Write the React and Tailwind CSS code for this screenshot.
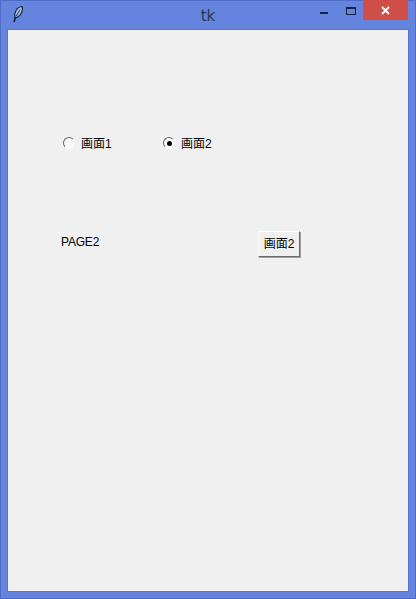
import React from "react";

const cjk = "font-['Liberation_Sans','Noto_Sans_CJK_JP',sans-serif]";

function Radio({ label, checked }) {
  return (
    <label className="flex items-center w-[100px] h-[16px]">
      <span className="ml-[1px] w-[12px] h-[12px] rounded-full bg-[#f9f9f9] border border-t-[#666666] border-l-[#666666] border-r-[#f6f6f6] border-b-[#ffffff] flex items-center justify-center shrink-0">
        {checked && <span className="w-[5px] h-[5px] rounded-full bg-black"></span>}
      </span>
      <span className="ml-[6px] mt-[1px] text-[12px] leading-[16px] text-black">{label}</span>
    </label>
  );
}

export default function App() {
  return (
    <div className={`w-[416px] h-[599px] flex flex-col bg-[#6484de] shadow-[inset_0_0_0_1px_#4f6cc8] ${cjk}`}>
      {/* Title bar */}
      <div className="h-[30px] shrink-0 flex items-start relative">
        <svg className="ml-[12px] mt-[5px]" width="12" height="18" viewBox="0 0 12 18" fill="none">
          <path d="M2 17 L4 11" stroke="#0c1830" strokeWidth="1.5" />
          <path d="M3 13 C1.5 8 5 2 10 1.5 C11.5 5 8.5 12 3 13Z" fill="#b9cbea" stroke="#10223f" strokeWidth="1.2" />
          <path d="M4 11.5 L8 4.5" stroke="#10223f" strokeWidth="1" />
        </svg>
        <div className="absolute left-0 right-0 top-[7px] text-center text-[15px] leading-[18px] text-[#2b3550] font-['DejaVu_Sans',sans-serif]">tk</div>
        <div className="ml-auto flex items-start mr-[8px]">
          <div className="mt-[12px] w-[8px] h-[2px] bg-[#16243f]"></div>
          <div className="ml-[18px] mt-[7px] w-[10px] h-[8px] border border-[#16243f] border-t-2"></div>
          <div className="ml-[7px] w-[45px] h-[20px] bg-[#cf4f48] flex items-center justify-center">
            <svg width="9" height="9" viewBox="0 0 9 9">
              <path d="M1 1 L8 8 M8 1 L1 8" stroke="#fff" strokeWidth="1.8" />
            </svg>
          </div>
        </div>
      </div>

      {/* Client area */}
      <div className="flex-1 mx-[8px] mb-[8px] bg-[#f0f0f0] shadow-[0_0_0_1px_#5575d6] pt-[105px] pl-[54px]">
        <div className="flex">
          <Radio label="画面1" />
          <Radio label="画面2" checked />
        </div>
        <div className="flex items-start mt-[80px]">
          <div className="w-[197px] pt-[3px] text-[12px] leading-[16px] tracking-[-0.2px] text-black -ml-[1px]">PAGE2</div>
          <button className="w-[42px] h-[26px] bg-[#f0f0f0] border border-t-white border-l-white border-r-[#696969] border-b-[#696969] shadow-[1px_1px_0_#a0a0a0] text-[12px] leading-[16px] text-black">画面2</button>
        </div>
      </div>
    </div>
  );
}
